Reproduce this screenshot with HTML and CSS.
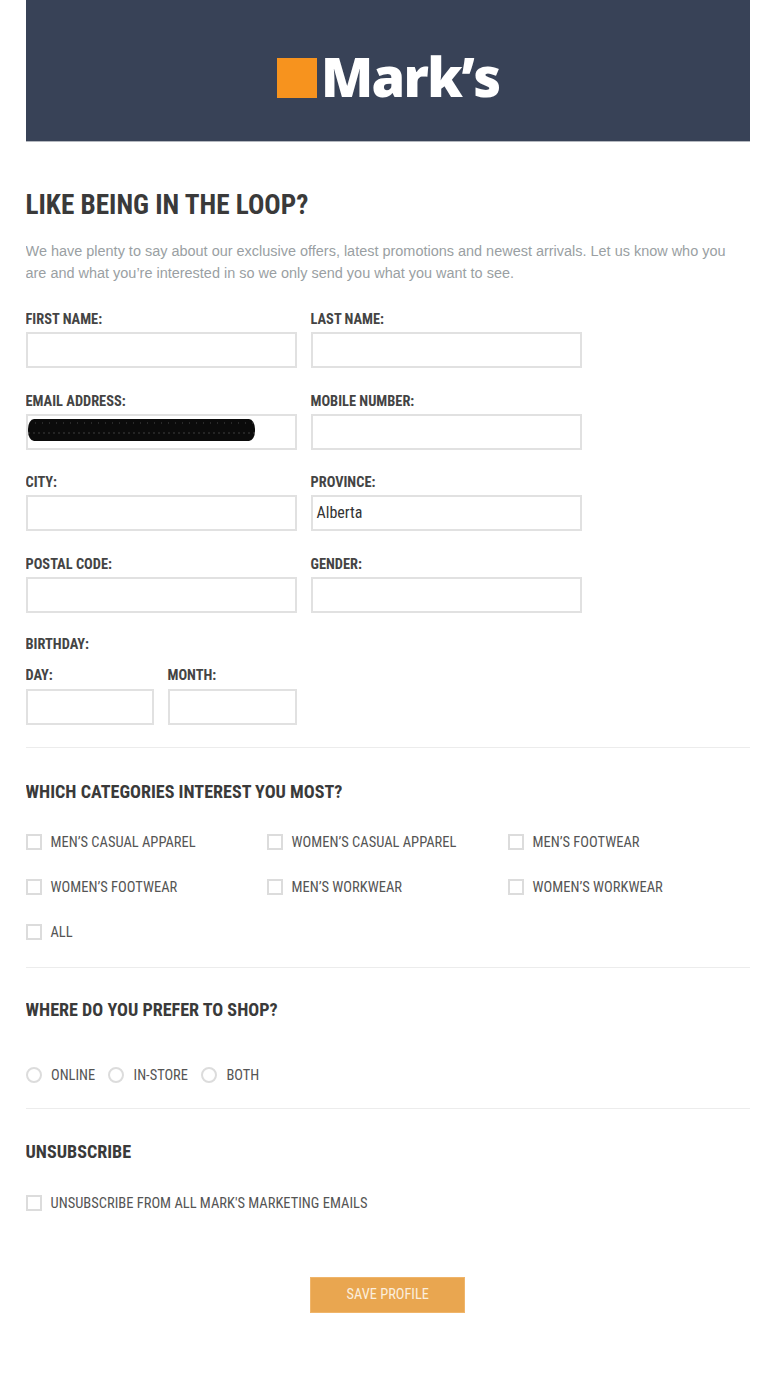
FILE: index.html
```html
<!DOCTYPE html>
<html lang="en">
<head>
<meta charset="utf-8">
<title>Mark's</title>
<link rel="stylesheet" href="styles.css">
</head>
<body>
<div class="page">
  <header class="banner">
    <div class="logo"><span class="logo-square"></span><span class="logo-text">Mark’s</span></div>
  </header>
  <h1 class="title">LIKE BEING IN THE LOOP?</h1>
  <p class="intro">We have plenty to say about our exclusive offers, latest promotions and newest arrivals. Let us know who you are and what you’re interested in so we only send you what you want to see.</p>
  <form class="fields">
    <div class="field"><label class="label">FIRST NAME:</label><div class="input"></div></div>
    <div class="field"><label class="label">LAST NAME:</label><div class="input"></div></div>
    <div class="field"><label class="label">EMAIL ADDRESS:</label><div class="input"><span class="redact"></span></div></div>
    <div class="field"><label class="label">MOBILE NUMBER:</label><div class="input"></div></div>
    <div class="field"><label class="label">CITY:</label><div class="input"></div></div>
    <div class="field"><label class="label">PROVINCE:</label><div class="input">Alberta</div></div>
    <div class="field"><label class="label">POSTAL CODE:</label><div class="input"></div></div>
    <div class="field"><label class="label">GENDER:</label><div class="input"></div></div>
  </form>
  <div class="birthday-label label">BIRTHDAY:</div>
  <div class="birthday">
    <div class="field"><label class="label">DAY:</label><div class="input"></div></div>
    <div class="field"><label class="label">MONTH:</label><div class="input"></div></div>
  </div>
  <section class="section categories">
    <h2 class="heading">WHICH CATEGORIES INTEREST YOU MOST?</h2>
    <div class="checks">
      <div class="opt"><span class="box"></span>MEN’S CASUAL APPAREL</div>
      <div class="opt"><span class="box"></span>WOMEN’S CASUAL APPAREL</div>
      <div class="opt"><span class="box"></span>MEN’S FOOTWEAR</div>
      <div class="opt"><span class="box"></span>WOMEN’S FOOTWEAR</div>
      <div class="opt"><span class="box"></span>MEN’S WORKWEAR</div>
      <div class="opt"><span class="box"></span>WOMEN’S WORKWEAR</div>
      <div class="opt"><span class="box"></span>ALL</div>
    </div>
  </section>
  <section class="section shop">
    <h2 class="heading">WHERE DO YOU PREFER TO SHOP?</h2>
    <div class="radios">
      <div class="opt"><span class="box round"></span>ONLINE</div>
      <div class="opt"><span class="box round"></span>IN-STORE</div>
      <div class="opt"><span class="box round"></span>BOTH</div>
    </div>
  </section>
  <section class="section unsub">
    <h2 class="heading">UNSUBSCRIBE</h2>
    <div class="opt unsub-opt"><span class="box"></span>UNSUBSCRIBE FROM ALL MARK'S MARKETING EMAILS</div>
  </section>
  <div class="actions"><button class="save" type="button">SAVE PROFILE</button></div>
</div>
</body>
</html>
```
FILE: styles.css
```css
html, body { margin: 0; padding: 0; background: #fff; }
body { font-family: Roboto, "Liberation Sans", sans-serif; font-stretch: condensed; color: #3c3c3c; }
.page { width: 724.5px; height: 1392px; margin-left: 25.5px; overflow: hidden; }
.banner { height: 141px; background: #384257; border-bottom: 1px solid #b4b8bf; display: flex; justify-content: center; }
.logo { display: flex; align-items: flex-start; margin-top: 58px; height: 40px; margin-left: 1px; }
.logo-square { width: 40px; height: 40px; background: #f7931e; }
.logo-text { font-family: "Open Sans", sans-serif; font-stretch: normal; font-weight: 800; font-size: 54px; line-height: 37px; letter-spacing: -1.6px; color: #fff; margin-left: 4px; }
.title { margin: 48px 0 0; font-size: 27.2px; line-height: 30px; font-weight: 700; color: #3a3a3a; }
.intro { margin: 20px 0 0; font-family: "Liberation Sans", sans-serif; font-size: 14.46px; line-height: 22px; color: #9a9fa3; width: 710px; font-stretch: normal; }
.fields { display: grid; grid-template-columns: 271px 271px; column-gap: 14px; row-gap: 24.5px; margin-top: 27px; }
.label { display: block; font-size: 14.4px; line-height: 18px; font-weight: 700; color: #444; }
.field .label { margin-bottom: 3px; }
.input { box-sizing: border-box; height: 36px; border: 2px solid #e1e1e1; padding: 0 4px; font-size: 16px; line-height: 32px; color: #333; display: flex; align-items: center; }
.redact { display: block; width: 227px; height: 22px; margin: -3px 0 0 -4px; border-radius: 6px / 10px; background: repeating-linear-gradient(90deg, rgba(255,255,255,.12) 0 1px, transparent 1px 7px) 0 3px / 100% 2px no-repeat, repeating-linear-gradient(90deg, rgba(255,255,255,.1) 0 2px, transparent 2px 5px) 0 13px / 100% 2px no-repeat, #0b0b0b; }
.birthday-label { margin-top: 23px; }
.birthday { display: grid; grid-template-columns: 128px 129px; column-gap: 14px; margin-top: 13px; }
.birthday .field .label { margin-bottom: 4px; }
.section { border-top: 1px solid #ececec; }
.categories { margin-top: 22px; padding-top: 34px; }
.heading { margin: 0; font-size: 18.1px; line-height: 20px; font-weight: 700; color: #3a3a3a; }
.checks { display: grid; grid-template-columns: 241px 241px 241px; row-gap: 27px; margin-top: 31px; padding-bottom: 26px; }
.opt { box-sizing: border-box; display: flex; align-items: center; height: 18px; padding-top: 2px; font-size: 14.5px; color: #555; white-space: nowrap; }
.box { box-sizing: border-box; width: 16px; height: 16px; border: 2px solid #dcdcdc; margin: -2px 9px 0 0; flex: none; }
.box.round { border-radius: 50%; margin-right: 9.5px; }
.shop { padding-top: 32px; }
.radios { display: flex; gap: 13px; margin-top: 46px; padding-bottom: 24px; }
.radios .opt { font-size: 14.4px; }
.unsub { padding-top: 33px; }
.unsub-opt { margin-top: 32px; }
.actions { display: flex; justify-content: center; margin-top: 65px; }
.save { width: 155px; height: 36px; border: 1px solid #f0b56a; background: #e9a650; color: #fbeedd; font-family: inherit; font-stretch: condensed; font-size: 14.4px; padding: 0; }
```
